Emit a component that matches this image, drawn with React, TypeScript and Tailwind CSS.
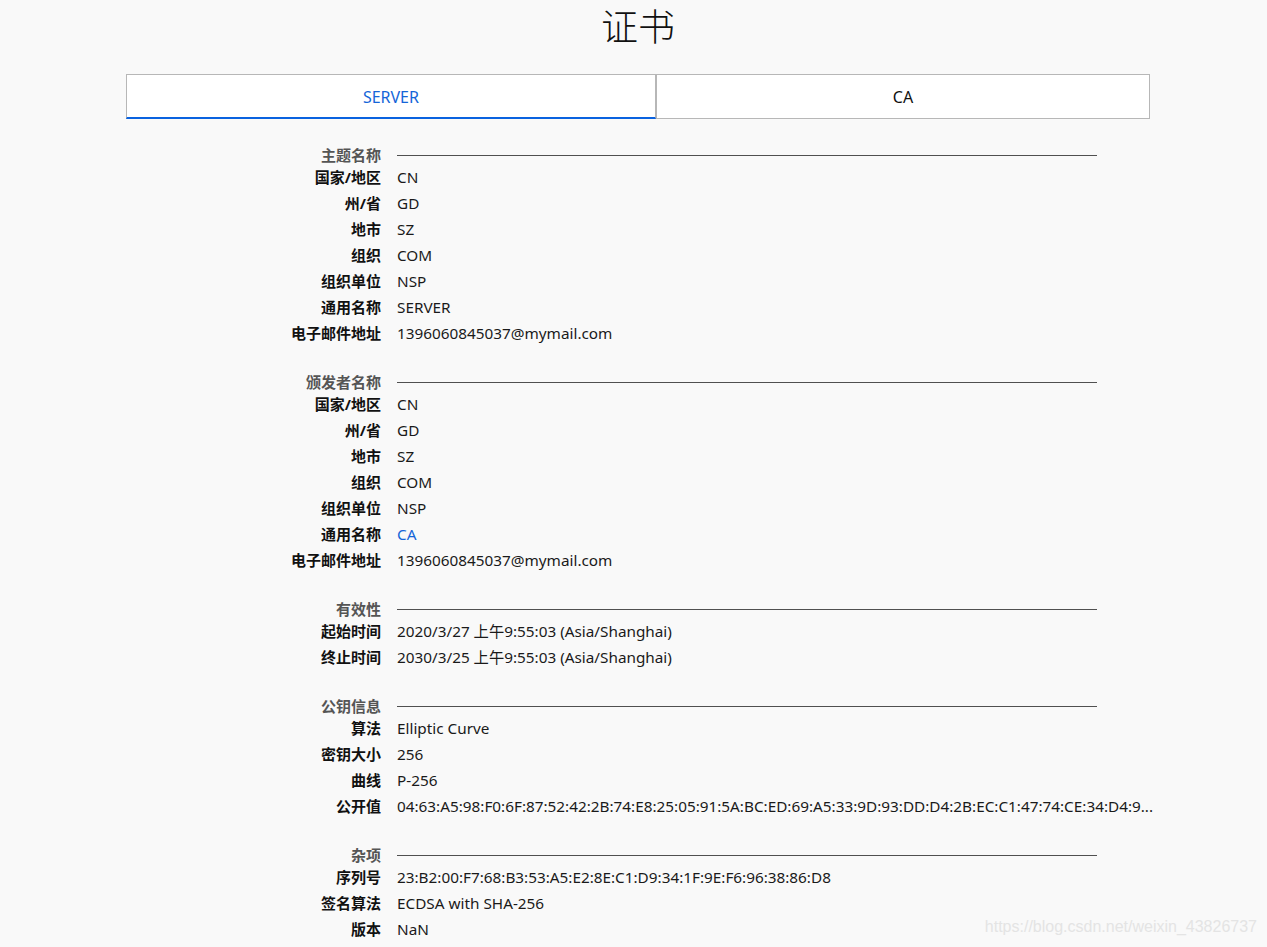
import React from "react";

type Row = { label: string; value: string; tone?: "link" };
type Section = { title: string; rows: Row[] };

const subject: Row[] = [
  { label: "国家/地区", value: "CN" },
  { label: "州/省", value: "GD" },
  { label: "地市", value: "SZ" },
  { label: "组织", value: "COM" },
  { label: "组织单位", value: "NSP" },
  { label: "通用名称", value: "SERVER" },
  { label: "电子邮件地址", value: "1396060845037@mymail.com" },
];

const sections: Section[] = [
  { title: "主题名称", rows: subject },
  {
    title: "颁发者名称",
    rows: subject.map((r) => (r.label === "通用名称" ? { ...r, value: "CA", tone: "link" as const } : r)),
  },
  {
    title: "有效性",
    rows: [
      { label: "起始时间", value: "2020/3/27 上午9:55:03 (Asia/Shanghai)" },
      { label: "终止时间", value: "2030/3/25 上午9:55:03 (Asia/Shanghai)" },
    ],
  },
  {
    title: "公钥信息",
    rows: [
      { label: "算法", value: "Elliptic Curve" },
      { label: "密钥大小", value: "256" },
      { label: "曲线", value: "P-256" },
      {
        label: "公开值",
        value:
          "04:63:A5:98:F0:6F:87:52:42:2B:74:E8:25:05:91:5A:BC:ED:69:A5:33:9D:93:DD:D4:2B:EC:C1:47:74:CE:34:D4:9...",
      },
    ],
  },
  {
    title: "杂项",
    rows: [
      { label: "序列号", value: "23:B2:00:F7:68:B3:53:A5:E2:8E:C1:D9:34:1F:9E:F6:96:38:86:D8" },
      { label: "签名算法", value: "ECDSA with SHA-256" },
      { label: "版本", value: "NaN" },
    ],
  },
];

function CertSection({ section }: { section: Section }) {
  return (
    <div className="mt-[27px]">
      <div className="flex h-[18px] items-center">
        <div className="w-[255px] shrink-0 text-right text-[15px] font-bold text-[#555555]">{section.title}</div>
        <div className="ml-4 w-[700px] border-t border-[#505050]" />
      </div>
      {section.rows.map((row) => (
        <div key={row.label} className="flex h-[26px] items-center">
          <div className="w-[255px] shrink-0 text-right text-[15px] font-bold text-[#111111]">{row.label}</div>
          <div
            className={`ml-4 whitespace-nowrap text-[15.3px] ${
              row.tone === "link" ? "text-[#1565d8]" : "text-[#1a1a1a]"
            }`}
          >
            {row.value}
          </div>
        </div>
      ))}
    </div>
  );
}

export default function App() {
  return (
    <div
      className="relative min-h-screen overflow-hidden bg-[#f9f9f9]"
      style={{ fontFamily: '"Noto Sans", "Noto Sans CJK SC", sans-serif' }}
    >
      <div className="ml-[126px] w-[1024px]">
        <h1 className="pt-[3px] text-center text-[37px] font-light leading-[48px] text-[#111111]">证书</h1>

        <div className="mt-[23px] flex h-[45px]">
          <button
            type="button"
            className="flex-auto border border-b-2 border-[#b7b7b7] border-b-[#0a62df] bg-white pt-px text-[16px] text-[#1565d8]"
          >
            SERVER
          </button>
          <button
            type="button"
            className="flex-auto border border-[#b7b7b7] bg-white text-[16px] text-[#111111]"
          >
            CA
          </button>
        </div>

        {sections.map((s) => (
          <CertSection key={s.title} section={s} />
        ))}
      </div>

      <div
        className="absolute bottom-[8px] right-[10px] text-[16px] text-[#e4e4e4]"
        style={{ fontFamily: '"Liberation Sans", Arial, sans-serif' }}
      >
        https://blog.csdn.net/weixin_43826737
      </div>
    </div>
  );
}
